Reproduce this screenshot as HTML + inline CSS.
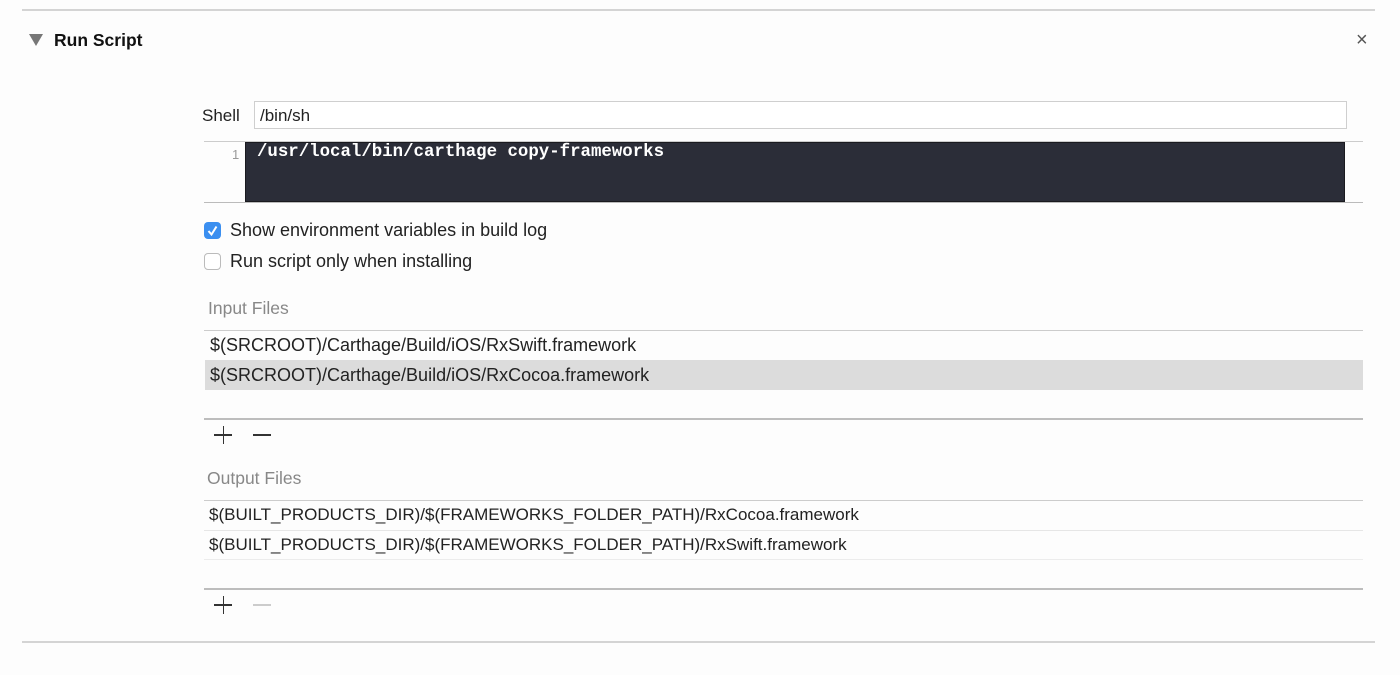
<!DOCTYPE html>
<html><head><meta charset="utf-8"><style>
*{margin:0;padding:0;box-sizing:border-box}
body{width:1400px;height:675px;background:#fdfdfd;font-family:"Liberation Sans",sans-serif;color:#222;position:relative;overflow:hidden}
.a{position:absolute}
.hl{position:absolute;height:2px;background:#d4d4d4}
.t{position:absolute;font-size:17px;white-space:nowrap;line-height:20px}
.cb{position:absolute;width:17px;height:17px;border-radius:4px}
</style></head><body>
<div class="hl" style="left:22px;top:9px;width:1353px"></div>
<div class="a" style="left:29px;top:34px;width:0;height:0;border-left:7px solid transparent;border-right:7px solid transparent;border-top:12px solid #777"></div>
<div class="t" style="left:54px;top:30px;font-weight:bold;color:#111;font-size:17.5px">Run Script</div>
<div class="t" style="left:1356px;top:30px;color:#555;font-size:20px">×</div>

<div class="t" style="left:202px;top:106px;color:#222">Shell</div>
<div class="a" style="left:254px;top:101px;width:1093px;height:28px;border:1px solid #cfcfcf;background:#fff"></div>
<div class="t" style="left:260px;top:106px">/bin/sh</div>

<div class="a" style="left:204px;top:141px;width:1159px;height:1px;background:#ccc"></div>
<div class="a" style="left:204px;top:202px;width:1159px;height:1px;background:#bbb"></div>
<div class="a" style="left:245px;top:142px;width:1100px;height:60px;background:#2b2d38;border:1px solid #1a1a1f"></div>
<div class="t" style="left:232px;top:145px;font-size:13px;color:#999">1</div>
<div class="t" style="left:257px;top:143px;font-family:'Liberation Mono',monospace;font-size:17.4px;color:#fff;font-weight:bold">/usr/local/bin/carthage copy-frameworks</div>

<div class="cb" style="left:204px;top:222px;background:#3b8ff0"><svg width="17" height="17" viewBox="0 0 17 17"><path d="M4.5 9 L7.5 12.5 L12.5 4.5" stroke="#fff" stroke-width="2" fill="none"/></svg></div>
<div class="t" style="left:230px;top:220px;font-size:18px">Show environment variables in build log</div>
<div class="cb" style="left:204px;top:253px;border:1px solid #bbb;background:#fff"></div>
<div class="t" style="left:230px;top:251px;font-size:18px">Run script only when installing</div>

<div class="t" style="left:208px;top:298px;color:#888;font-size:17.5px">Input Files</div>
<div class="a" style="left:204px;top:330px;width:1159px;height:1px;background:#ccc"></div>
<div class="t" style="left:210px;top:335px;font-size:18px">$(SRCROOT)/Carthage/Build/iOS/RxSwift.framework</div>
<div class="a" style="left:205px;top:360px;width:1158px;height:30px;background:#dcdcdc"></div>
<div class="t" style="left:210px;top:365px;font-size:18px">$(SRCROOT)/Carthage/Build/iOS/RxCocoa.framework</div>
<div class="hl" style="left:204px;top:418px;width:1159px;background:#bdbdbd"></div>
<div class="a" style="left:214px;top:434px;width:18px;height:1.5px;background:#333"></div>
<div class="a" style="left:222.5px;top:426px;width:1.5px;height:18px;background:#333"></div>
<div class="a" style="left:253px;top:434px;width:18px;height:1.5px;background:#333"></div>

<div class="t" style="left:207px;top:468px;color:#888;font-size:17.5px">Output Files</div>
<div class="a" style="left:204px;top:500px;width:1159px;height:1px;background:#ccc"></div>
<div class="t" style="left:209px;top:505px">$(BUILT_PRODUCTS_DIR)/$(FRAMEWORKS_FOLDER_PATH)/RxCocoa.framework</div>
<div class="a" style="left:204px;top:530px;width:1159px;height:1px;background:#e6e6e6"></div>
<div class="t" style="left:209px;top:535px">$(BUILT_PRODUCTS_DIR)/$(FRAMEWORKS_FOLDER_PATH)/RxSwift.framework</div>
<div class="a" style="left:204px;top:559px;width:1159px;height:1px;background:#ececec"></div>
<div class="hl" style="left:204px;top:588px;width:1159px;background:#bdbdbd"></div>
<div class="a" style="left:214px;top:604px;width:18px;height:1.5px;background:#333"></div>
<div class="a" style="left:222.5px;top:596px;width:1.5px;height:18px;background:#333"></div>
<div class="a" style="left:253px;top:604px;width:18px;height:1.5px;background:#ccc"></div>

<div class="hl" style="left:22px;top:641px;width:1353px"></div>
</body></html>
